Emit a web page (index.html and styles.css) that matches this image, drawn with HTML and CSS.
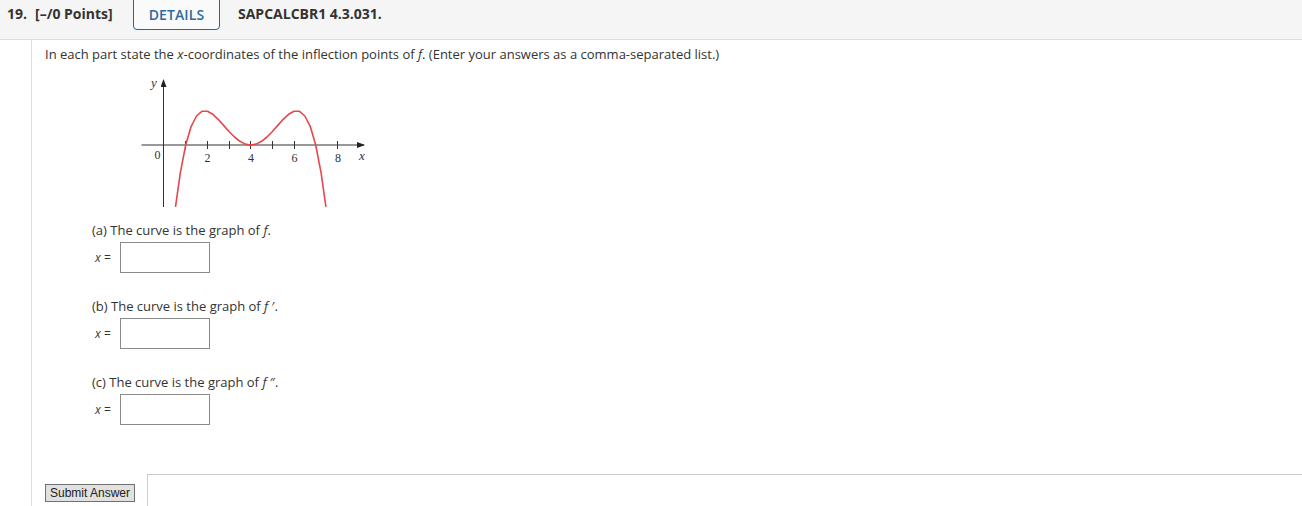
FILE: index.html
```html
<!DOCTYPE html>
<html lang="en">
  <head>
    <meta charset="UTF-8" />
    <meta name="viewport" content="width=device-width, initial-scale=1.0" />
    <title>Question 19</title>
    <link rel="stylesheet" href="styles.css">
  </head>
  <body>
    <div class="qhead">
      <span class="qnum">19.</span>
      <span class="qpoints">[&ndash;/0 Points]</span>
      <button type="button" class="details">DETAILS</button>
      <span class="qref">SAPCALCBR1 4.3.031.</span>
    </div>

    <div class="qbody">
      <p class="prompt">
        In each part state the <i>x</i>-coordinates of the inflection points of <i>f</i>. (Enter your answers as a comma-separated list.)
      </p>

      <div class="graph">
        <svg width="232" height="136" viewBox="140 74 232 136">
          <defs>
            <marker id="arrow" markerWidth="8" markerHeight="6" refX="7" refY="3" orient="auto" markerUnits="userSpaceOnUse">
              <path d="M0,0 L8,3 L0,6 Z" fill="#222" />
            </marker>
          </defs>
          <line x1="141.5" y1="145" x2="364" y2="145" stroke="#333" stroke-width="1" marker-end="url(#arrow)" />
          <line x1="163.5" y1="207" x2="163.5" y2="80" stroke="#333" stroke-width="1" marker-end="url(#arrow)" />
          <g stroke="#333" stroke-width="1">
            <line x1="185.5" y1="141" x2="185.5" y2="149" />
            <line x1="207.5" y1="141" x2="207.5" y2="149" />
            <line x1="229.5" y1="141" x2="229.5" y2="149" />
            <line x1="250.5" y1="141" x2="250.5" y2="149" />
            <line x1="272.5" y1="141" x2="272.5" y2="149" />
            <line x1="294.5" y1="141" x2="294.5" y2="149" />
            <line x1="337.5" y1="141" x2="337.5" y2="149" />
          </g>
          <g class="ticklbl">
            <text x="157.5" y="159" text-anchor="middle">0</text>
            <text x="207.5" y="162" text-anchor="middle">2</text>
            <text x="251" y="162" text-anchor="middle">4</text>
            <text x="294.5" y="162" text-anchor="middle">6</text>
            <text x="338" y="162" text-anchor="middle">8</text>
            <text x="359" y="160" class="var">x</text>
            <text x="151" y="87" class="var">y</text>
          </g>
          <polyline fill="none" stroke="#e8464c" stroke-width="1.6" stroke-linejoin="round"
            points="175.5,206.9 180.3,172.9 185.7,145 191.1,126.6 196.5,116 201.9,111.3 207.4,111.2 212.8,114.3 218.2,119.3 223.6,125.4 229,131.5 234.5,137 239.9,141.3 245.3,144.1 250.7,145 256.1,144.1 261.5,141.3 267,137 272.4,131.5 277.8,125.4 283.2,119.3 288.6,114.3 294,111.2 299.5,111.3 304.9,116 310.3,126.6 315.7,145 321.1,172.9 325.9,206.9" />
        </svg>
      </div>

      <div class="part">
        <p class="part-label">(a) The curve is the graph of <i>f</i>.</p>
        <div class="answer">
          <label for="ansA"><i>x</i> =</label>
          <input type="text" id="ansA" class="ans-box" />
        </div>
      </div>

      <div class="part">
        <p class="part-label">(b) The curve is the graph of <i>f</i> &prime;.</p>
        <div class="answer">
          <label for="ansB"><i>x</i> =</label>
          <input type="text" id="ansB" class="ans-box" />
        </div>
      </div>

      <div class="part">
        <p class="part-label">(c) The curve is the graph of <i>f</i> &Prime;.</p>
        <div class="answer">
          <label for="ansC"><i>x</i> =</label>
          <input type="text" id="ansC" class="ans-box" />
        </div>
      </div>

      <div class="submit-row">
        <button type="button" class="submit">Submit Answer</button>
        <div class="feedback"></div>
      </div>
    </div>
  </body>
</html>
```

FILE: styles.css
```css
body {
  margin: 0;
  font-family: "Open Sans", "Liberation Sans", sans-serif;
  font-size: 13px;
  color: #333;
  background: #fff;
}

.qhead {
  display: flex;
  align-items: flex-start;
  height: 39px;
  background-color: #f5f5f5;
  border-bottom: 1px solid #ddd;
  font-size: 14px;
  font-weight: bold;
}

.qnum {
  margin-left: 7px;
  margin-top: 4px;
  width: 28px;
}

.qpoints {
  margin-top: 4px;
  width: 98px;
}

.details {
  width: 87px;
  height: 31px;
  margin-top: -1px;
  padding: 0;
  background-color: #fafafa;
  border: 1px solid #2e6290;
  border-radius: 0 0 4px 4px;
  color: #2d6a9f;
  font-family: inherit;
  font-size: 14px;
  font-weight: 600;
  letter-spacing: 0.1px;
}

.qref {
  margin-left: 18px;
  margin-top: 4px;
}

.qbody {
  margin-left: 31px;
  border-left: 1px solid #ddd;
  padding-left: 13px;
  padding-top: 5px;
  min-height: 480px;
  box-sizing: border-box;
}

.prompt {
  margin: 0;
  line-height: 18px;
}

.graph {
  margin: 11px 0 9px 95px;
  height: 138px;
}

.graph svg {
  display: block;
}

.ticklbl text {
  font-family: "Liberation Serif", serif;
  font-size: 12px;
  fill: #333;
}

.ticklbl .var {
  font-style: italic;
  font-size: 13px;
}

.part {
  margin-left: 47px;
  margin-bottom: 24px;
}

.part-label {
  margin: 0 0 3px;
  line-height: 18px;
}

.answer {
  display: flex;
  align-items: center;
}

.answer label {
  width: 28px;
  margin-left: 3px;
  color: #333;
  font-size: 12px;
}

.ans-box {
  width: 90px;
  height: 31px;
  box-sizing: border-box;
  border: 1px solid #8a8a8a;
  margin: 0 0 0 -3px;
  padding: 2px 4px;
  font-size: 13px;
}

.submit-row {
  display: flex;
  align-items: flex-start;
  margin-top: 49px;
}

.submit {
  height: 18px;
  margin-top: 10px;
  padding: 0 4px;
  background-color: #e1e1e1;
  border: 1px solid #707070;
  border-radius: 0;
  font-family: "Liberation Sans", Arial, sans-serif;
  font-size: 12px;
  color: #222;
}

.feedback {
  flex: 1;
  height: 40px;
  margin-left: 12px;
  border-top: 1px solid #ccc;
  border-left: 1px solid #ccc;
}
```
